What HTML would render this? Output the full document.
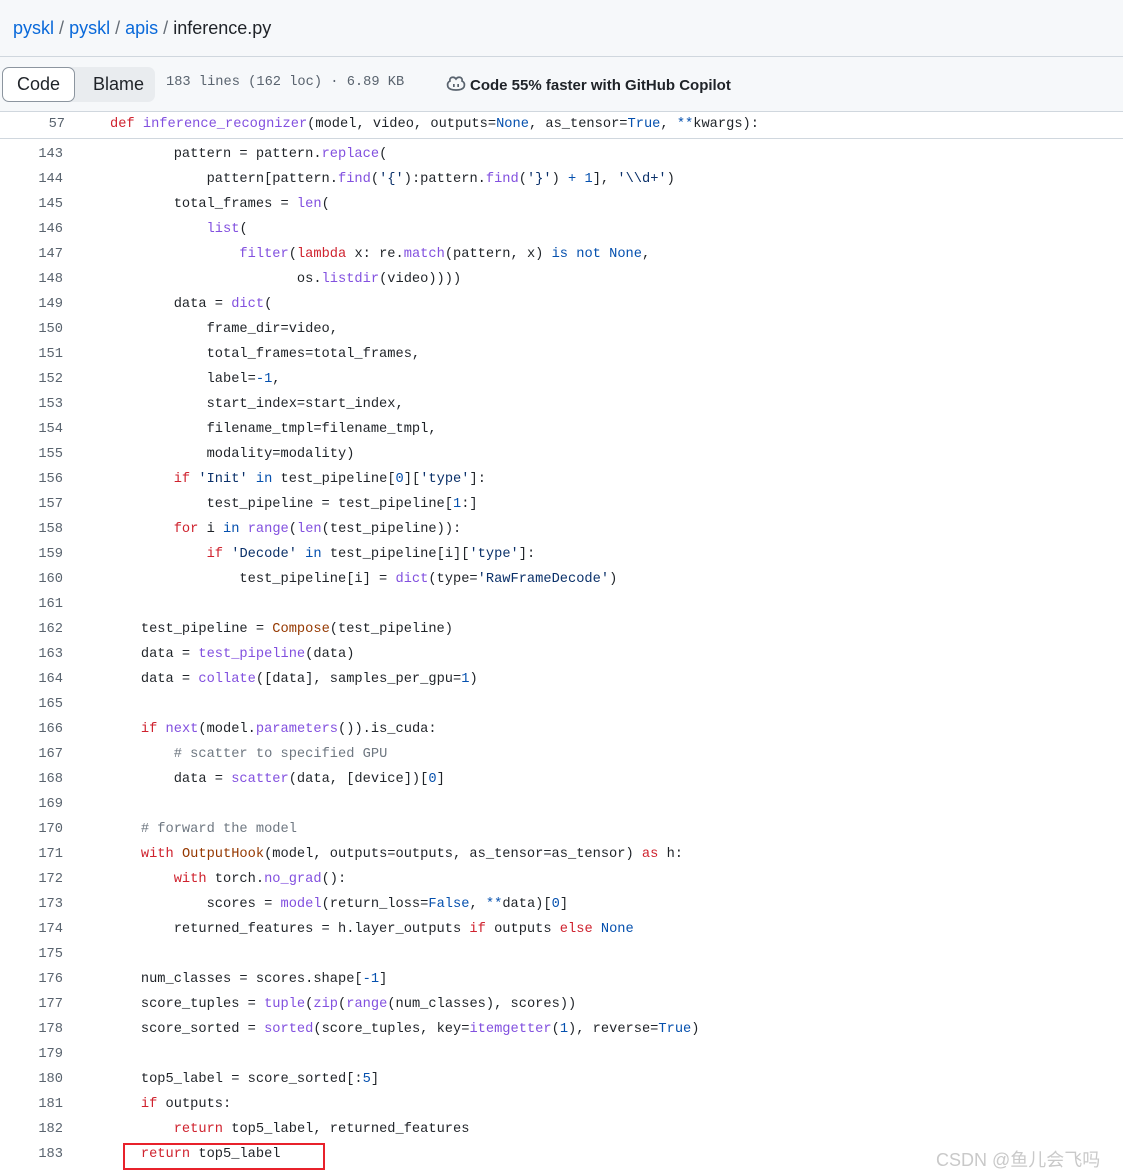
<!DOCTYPE html>
<html><head><meta charset="utf-8"><style>
*{margin:0;padding:0;box-sizing:border-box}
body{width:1123px;height:1176px;background:#fff;position:relative;overflow:hidden;font-family:"Liberation Sans",sans-serif;color:#1f2328}
.top{position:absolute;left:0;top:0;width:1123px;height:112px;background:#f6f8fa;border-bottom:1px solid #d0d7de}
.bc{position:absolute;left:13px;top:18px;font-size:18px}
.bc a{color:#0969da;text-decoration:none}
.bc .s{color:#656d76}
.sep{position:absolute;left:0;top:56px;width:1123px;height:1px;background:#d0d7de}
.seg{position:absolute;left:2px;top:67px;width:153px;height:35px;background:#e9ecef;border-radius:7px}
.code{position:absolute;left:0;top:0;width:73px;height:35px;background:#fff;border:1px solid #8c959f;border-radius:7px;font-size:18px;text-align:center;line-height:33px}
.blame{position:absolute;left:91px;top:0;font-size:18px;line-height:35px}
.meta{position:absolute;left:166px;top:75px;font-family:"Liberation Mono",monospace;font-size:13.7px;color:#59636e}
.cop{position:absolute;left:446px;top:75px;font-size:15px;font-weight:bold;color:#1f2328}
.sticky{position:absolute;left:0;top:112px;width:1123px;height:27px;border-bottom:1px solid #d0d7de;background:#fff}
pre,.ln{font-family:"Liberation Mono",monospace;font-size:13.7px;line-height:25px}
.ln{position:absolute;width:63px;text-align:right;color:#59636e}
pre{position:absolute;left:108px;color:#1f2328}
.k{color:#cf222e}.f{color:#8250df}.c{color:#0550ae}.s2{color:#0a3069}.m{color:#6e7781}.o{color:#953800}
.box{position:absolute;left:123px;top:1143px;width:202px;height:27px;border:2px solid #e8212b}
.wm{position:absolute;left:936px;top:1146px;font-size:18px;color:#c9c9c9;font-family:"Liberation Sans","Noto Sans CJK SC",sans-serif}
</style></head><body>
<div class="top">
<div class="bc"><a>pyskl</a> <span class="s">/</span> <a>pyskl</a> <span class="s">/</span> <a>apis</a> <span class="s">/</span> <span style="font-weight:normal;color:#1f2328">inference.py</span></div>
<div class="sep"></div>
<div class="seg"><div class="code">Code</div><div class="blame">Blame</div></div>
<div class="meta">183 lines (162 loc) · 6.89 KB</div>
<div class="cop"><svg width="20" height="18" viewBox="0 0 20 18" style="vertical-align:-3px;margin-right:4px"><path d="M4 6C3 2 8 1 10 4C12 1 17 2 16 6C18 7 19 9 18 12C16 16 4 16 2 12C1 9 2 7 4 6Z" fill="none" stroke="#59636e" stroke-width="1.7"/><rect x="7" y="9" width="1.7" height="3" fill="#59636e"/><rect x="11.3" y="9" width="1.7" height="3" fill="#59636e"/></svg>Code 55% faster with GitHub Copilot</div>
</div>
<div class="sticky">
<div class="ln" style="top:0px;left:2px">57</div>
<pre style="top:0px;left:110px"><span class="k">def</span> <span class="f">inference_recognizer</span>(model, video, outputs=<span class="c">None</span>, as_tensor=<span class="c">True</span>, <span class="c">**</span>kwargs):</pre>
</div>
<div class="ln" style="top:142px;left:0">143<br>144<br>145<br>146<br>147<br>148<br>149<br>150<br>151<br>152<br>153<br>154<br>155<br>156<br>157<br>158<br>159<br>160<br>161<br>162<br>163<br>164<br>165<br>166<br>167<br>168<br>169<br>170<br>171<br>172<br>173<br>174<br>175<br>176<br>177<br>178<br>179<br>180<br>181<br>182<br>183</div>
<pre style="top:142px">        pattern = pattern.<span class="f">replace</span>(
            pattern[pattern.<span class="f">find</span>(<span class="s2">'{'</span>):pattern.<span class="f">find</span>(<span class="s2">'}'</span>) <span class="c">+</span> <span class="c">1</span>], <span class="s2">'\\d+'</span>)
        total_frames = <span class="f">len</span>(
            <span class="f">list</span>(
                <span class="f">filter</span>(<span class="k">lambda</span> x: re.<span class="f">match</span>(pattern, x) <span class="c">is not</span> <span class="c">None</span>,
                       os.<span class="f">listdir</span>(video))))
        data = <span class="f">dict</span>(
            frame_dir=video,
            total_frames=total_frames,
            label=<span class="c">-1</span>,
            start_index=start_index,
            filename_tmpl=filename_tmpl,
            modality=modality)
        <span class="k">if</span> <span class="s2">'Init'</span> <span class="c">in</span> test_pipeline[<span class="c">0</span>][<span class="s2">'type'</span>]:
            test_pipeline = test_pipeline[<span class="c">1</span>:]
        <span class="k">for</span> i <span class="c">in</span> <span class="f">range</span>(<span class="f">len</span>(test_pipeline)):
            <span class="k">if</span> <span class="s2">'Decode'</span> <span class="c">in</span> test_pipeline[i][<span class="s2">'type'</span>]:
                test_pipeline[i] = <span class="f">dict</span>(type=<span class="s2">'RawFrameDecode'</span>)

    test_pipeline = <span class="o">Compose</span>(test_pipeline)
    data = <span class="f">test_pipeline</span>(data)
    data = <span class="f">collate</span>([data], samples_per_gpu=<span class="c">1</span>)

    <span class="k">if</span> <span class="f">next</span>(model.<span class="f">parameters</span>()).is_cuda:
        <span class="m"># scatter to specified GPU</span>
        data = <span class="f">scatter</span>(data, [device])[<span class="c">0</span>]

    <span class="m"># forward the model</span>
    <span class="k">with</span> <span class="o">OutputHook</span>(model, outputs=outputs, as_tensor=as_tensor) <span class="k">as</span> h:
        <span class="k">with</span> torch.<span class="f">no_grad</span>():
            scores = <span class="f">model</span>(return_loss=<span class="c">False</span>, <span class="c">**</span>data)[<span class="c">0</span>]
        returned_features = h.layer_outputs <span class="k">if</span> outputs <span class="k">else</span> <span class="c">None</span>

    num_classes = scores.shape[<span class="c">-1</span>]
    score_tuples = <span class="f">tuple</span>(<span class="f">zip</span>(<span class="f">range</span>(num_classes), scores))
    score_sorted = <span class="f">sorted</span>(score_tuples, key=<span class="f">itemgetter</span>(<span class="c">1</span>), reverse=<span class="c">True</span>)

    top5_label = score_sorted[:<span class="c">5</span>]
    <span class="k">if</span> outputs:
        <span class="k">return</span> top5_label, returned_features
    <span class="k">return</span> top5_label</pre>
<div class="box"></div>
<div class="wm">CSDN @鱼儿会飞吗</div>
</body></html>
